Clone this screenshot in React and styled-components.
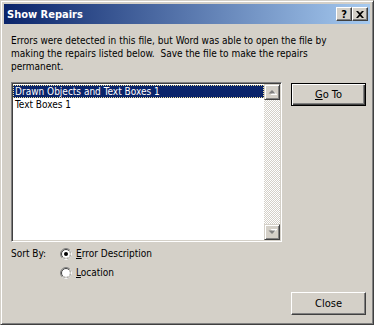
import React from 'react';
import styled, { createGlobalStyle } from 'styled-components';

const Global = createGlobalStyle`
  html, body { margin: 0; padding: 0; background: #d4d0c8; }
  * { box-sizing: border-box; }
`;

const Win = styled.div`
  width: 374px;
  height: 325px;
  background: #d4d0c8;
  border: 1px solid;
  border-color: #d4d0c8 #404040 #404040 #d4d0c8;
  box-shadow: inset 1px 1px #fff, inset -1px -1px #808080;
  padding: 3px;
  display: flex;
  flex-direction: column;
  font-family: "DejaVu Sans Condensed", "DejaVu Sans", sans-serif;
  font-stretch: condensed;
  font-size: 10px;
  color: #000;
`;

const TitleBar = styled.div`
  height: 20px;
  background: linear-gradient(to right, #0a246a, #a6caf0);
  display: flex;
  align-items: center;
  padding: 0 2px 0 3px;
`;

const Title = styled.div`
  flex: 1;
  color: #fff;
  font-weight: bold;
  font-size: 11px;
`;

const CapButton = styled.div`
  width: 16px;
  height: 14px;
  background: #d4d0c8;
  border: 1px solid;
  border-color: #fff #404040 #404040 #fff;
  box-shadow: inset -1px -1px #808080, inset 1px 1px #d4d0c8;
  display: flex;
  align-items: center;
  justify-content: center;
  margin-left: ${p => p.$gap || 0}px;
  font-family: "DejaVu Sans", sans-serif;
  font-weight: bold;
  font-size: 11px;
  line-height: 1;
  color: #000;
`;

const Body = styled.div`
  flex: 1;
  display: grid;
  grid-template-columns: 271px 75px;
  grid-template-rows: auto 1fr;
  column-gap: 9px;
  padding: 0 0 0 7px;
`;

const Message = styled.p`
  grid-column: 1 / span 2;
  margin: 10px 0 9px;
  line-height: 13px;
`;

const LeftCol = styled.div`
  display: flex;
  flex-direction: column;
`;

const RightCol = styled.div`
  margin-top: 1px;
  height: 232px;
  display: flex;
  flex-direction: column;
  justify-content: space-between;
`;

const ListBox = styled.div`
  width: 271px;
  height: 160px;
  background: #fff;
  border: 1px solid;
  border-color: #808080 #fff #fff #808080;
  box-shadow: inset 1px 1px #404040, inset -1px -1px #d4d0c8;
  padding: 1px;
  display: flex;
`;

const Items = styled.div`
  flex: 1;
  padding-top: 1px;
`;

const Item = styled.div`
  height: 13px;
  line-height: 11px;
  padding-left: 1px;
  white-space: nowrap;
  color: ${p => (p.$selected ? '#fff' : '#000')};
  background: ${p => (p.$selected ? '#0a246a' : 'transparent')};
  border: 1px dotted ${p => (p.$selected ? '#f2e29a' : 'transparent')};
`;

const Scrollbar = styled.div`
  width: 16px;
  display: flex;
  flex-direction: column;
  background-color: #fff;
  background-image: repeating-conic-gradient(#d4d0c8 0 25%, #fff 0 50%);
  background-size: 2px 2px;
`;

const Track = styled.div`
  flex: 1;
`;

const ArrowBtn = styled.div`
  width: 16px;
  height: 16px;
  background: #d4d0c8;
  border: 1px solid;
  border-color: #d4d0c8 #404040 #404040 #d4d0c8;
  box-shadow: inset 1px 1px #fff, inset -1px -1px #808080;
  display: flex;
  align-items: center;
  justify-content: center;
`;

const PushButton = styled.div`
  width: 75px;
  height: 23px;
  background: #d4d0c8;
  border: 1px solid;
  border-color: ${p => (p.$default ? '#000' : '#fff #404040 #404040 #fff')};
  box-shadow: ${p =>
    p.$default
      ? 'inset 1px 1px #fff, inset -1px -1px #404040, inset -2px -2px #808080'
      : 'inset -1px -1px #808080, inset 1px 1px #d4d0c8'};
  display: flex;
  align-items: center;
  justify-content: center;
  font-size: 11px;
`;

const Key = styled.span`
  text-decoration: underline;
`;

const SortGrid = styled.div`
  margin-top: 5px;
  display: grid;
  grid-template-columns: 49px auto;
  row-gap: 6px;
  align-items: center;
`;

const SortLabel = styled.div`
  line-height: 13px;
`;

const RadioRow = styled.div`
  grid-column: 2;
  display: flex;
  align-items: center;
  gap: 4px;
  height: 13px;
`;

const Radio = ({ checked }) => (
  <svg width="12" height="12" viewBox="0 0 12 12">
    <circle cx="6" cy="6" r="5.5" fill="none" stroke="#808080" />
    <path d="M9.89 2.11 A5.5 5.5 0 0 1 2.11 9.89" fill="none" stroke="#fff" />
    <circle cx="6" cy="6" r="4.5" fill="#fff" stroke="#404040" />
    <path d="M9.18 2.82 A4.5 4.5 0 0 1 2.82 9.18" fill="none" stroke="#d4d0c8" />
    {checked && <circle cx="6" cy="6" r="2" fill="#000" />}
  </svg>
);

const Arrow = ({ down }) => (
  <svg width="9" height="6" viewBox="0 0 9 6">
    <g transform={down ? 'translate(0,6) scale(1,-1)' : undefined}>
      <polygon points="1.5,5 8.5,5 5,1.5" fill="#fff" transform="translate(1,1)" />
      <polygon points="0.5,4.5 7.5,4.5 4,1" fill="#808080" />
    </g>
  </svg>
);

export default function App() {
  return (
    <>
      <Global />
      <Win>
        <TitleBar>
          <Title>Show Repairs</Title>
          <CapButton>?</CapButton>
          <CapButton $gap={0}>
            <svg width="8" height="7" viewBox="0 0 8 7">
              <path d="M0 0h2l2 2 2-2h2L5 3.5 8 7H6L4 5 2 7H0l3-3.5z" fill="#000" />
            </svg>
          </CapButton>
        </TitleBar>
        <Body>
          <Message>
            Errors were detected in this file, but Word was able to open the file by
            <br />
            making the repairs listed below.&nbsp; Save the file to make the repairs
            <br />
            permanent.
          </Message>
          <LeftCol>
            <ListBox>
              <Items>
                <Item $selected>Drawn Objects and Text Boxes 1</Item>
                <Item>Text Boxes 1</Item>
              </Items>
              <Scrollbar>
                <ArrowBtn><Arrow /></ArrowBtn>
                <Track />
                <ArrowBtn><Arrow down /></ArrowBtn>
              </Scrollbar>
            </ListBox>
            <SortGrid>
              <SortLabel>Sort By:</SortLabel>
              <RadioRow>
                <Radio checked />
                <span><Key>E</Key>rror Description</span>
              </RadioRow>
              <RadioRow>
                <Radio />
                <span><Key>L</Key>ocation</span>
              </RadioRow>
            </SortGrid>
          </LeftCol>
          <RightCol>
            <PushButton $default>
              <span><Key>G</Key>o To</span>
            </PushButton>
            <PushButton>Close</PushButton>
          </RightCol>
        </Body>
      </Win>
    </>
  );
}
